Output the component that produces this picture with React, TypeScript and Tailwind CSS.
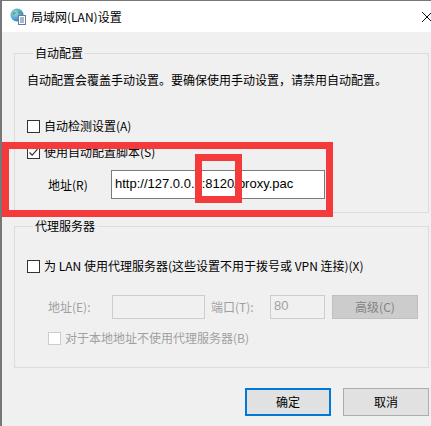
import React from "react";

const CJK = { fontFamily: '"Noto Sans CJK SC", "Noto Sans", sans-serif' };
const LAT = { fontFamily: '"Liberation Sans", Arial, sans-serif' };

function Box({ checked = false, disabled = false }: { checked?: boolean; disabled?: boolean }) {
  return (
    <span
      className={
        "inline-flex w-[13px] h-[13px] shrink-0 items-center justify-center border " +
        (disabled ? "border-[#cccccc] bg-white" : "border-[#333333] bg-white")
      }
    >
      {checked && (
        <svg width="11" height="11" viewBox="0 0 11 11">
          <path d="M1.5 5.5 L4.2 8.2 L9.5 2.2" fill="none" stroke="#333" strokeWidth="1.2" />
        </svg>
      )}
    </span>
  );
}

export default function App() {
  return (
    <div
      className="relative w-[431px] h-[426px] overflow-hidden bg-[#f0f0f0] border-l-2 border-t border-[#777777] text-[12px] leading-[16px] text-black flex flex-col"
      style={CJK}
    >
      {/* title bar */}
      <div className="h-[31px] bg-white flex items-center shrink-0 relative">
        <svg className="ml-[8px]" width="16" height="17" viewBox="0 0 16 17">
          <defs>
            <radialGradient id="g" cx="0.35" cy="0.35" r="0.7">
              <stop offset="0" stopColor="#9fd6f5" />
              <stop offset="1" stopColor="#2a7fc4" />
            </radialGradient>
          </defs>
          <circle cx="7" cy="7" r="6.5" fill="url(#g)" />
          <path d="M3 4 Q5 3 6 5 Q5 7 3 7 Z M8 2 Q11 3 11 6 Q9 7 8 5 Z" fill="#5fb04a" />
          <rect x="8.5" y="7.5" width="7" height="9" fill="#fff" stroke="#6a7c96" />
          <path d="M10 10 H14 M10 12 H14 M10 14 H14" stroke="#4a6fa5" strokeWidth="1" />
        </svg>
        <span className="ml-[5px]">局域网(LAN)设置</span>
        <svg className="absolute left-[419px] top-[10px]" width="12" height="12" viewBox="0 0 12 12">
          <path d="M1 1 L11 11 M11 1 L1 11" stroke="#111" strokeWidth="1" />
        </svg>
      </div>

      {/* body */}
      <div className="pl-[12px] pr-[2px] pt-[13px] flex flex-col">
        <fieldset className="border border-[#dcdcdc] pl-[12px] pb-[13px]">
          <legend className="ml-[6px] px-[2px] leading-[16px]">自动配置</legend>
          <div className="mt-[11px]">自动配置会覆盖手动设置。要确保使用手动设置，请禁用自动配置。</div>
          <label className="mt-[30px] flex items-center gap-[4px]">
            <Box />
            <span>自动检测设置(A)</span>
          </label>
          <label className="mt-[10px] flex items-center gap-[4px]">
            <Box checked />
            <span>使用自动配置脚本(S)</span>
          </label>
          <div className="mt-[10px] ml-[21px] flex items-center">
            <span className="w-[63px]">地址(R)</span>
            <div
              className="w-[214px] h-[29px] bg-white border border-[#7a7a7a] flex items-center pl-[3px] text-[13px] pb-[2px]"
              style={LAT}
            >
              http://127.0.0.1:8120/proxy.pac
            </div>
          </div>
        </fieldset>

        <fieldset className="mt-[5px] border border-[#dcdcdc] pl-[12px] pb-[21px]">
          <legend className="ml-[6px] px-[2px] leading-[16px]">代理服务器</legend>
          <label className="mt-[24px] flex items-center gap-[4px]">
            <Box />
            <span>为 LAN 使用代理服务器(这些设置不用于拨号或 VPN 连接)(X)</span>
          </label>
          <div className="mt-[21px] ml-[21px] flex items-center text-[#a0a0a0]">
            <span className="w-[64px]">地址(E):</span>
            <div className="w-[93px] h-[24px] border border-[#cccccc] bg-[#f0f0f0]" />
            <span className="ml-[6px] w-[59px]">端口(T):</span>
            <div
              className="w-[55px] h-[24px] border border-[#cccccc] bg-[#f0f0f0] flex items-center pl-[3px] text-[13px] pb-[2px]"
              style={LAT}
            >
              80
            </div>
            <div className="ml-[7px] w-[86px] h-[24px] border border-[#bfbfbf] bg-[#cccccc] flex items-center justify-center text-[#838383]">
              高级(C)
            </div>
          </div>
          <label className="mt-[11px] ml-[21px] flex items-center gap-[4px] text-[#a0a0a0]">
            <Box disabled />
            <span>对于本地地址不使用代理服务器(B)</span>
          </label>
        </fieldset>

        <div className="mt-[20px] flex justify-end gap-[12px] pr-[0px]">
          <div className="w-[86px] h-[28px] border-2 border-[#0078d7] bg-[#e1e1e1] flex items-center justify-center">
            确定
          </div>
          <div className="w-[86px] h-[28px] border border-[#adadad] bg-[#e1e1e1] flex items-center justify-center">
            取消
          </div>
        </div>
      </div>

      {/* red annotation overlays */}
      <div className="absolute left-[0px] top-[141px] w-[331px] h-[75px] border-[7px] border-[#f43a3a]" />
      <div className="absolute left-[193px] top-[153px] w-[47px] h-[49px] border-[7px] border-[#f43a3a]" />
    </div>
  );
}
